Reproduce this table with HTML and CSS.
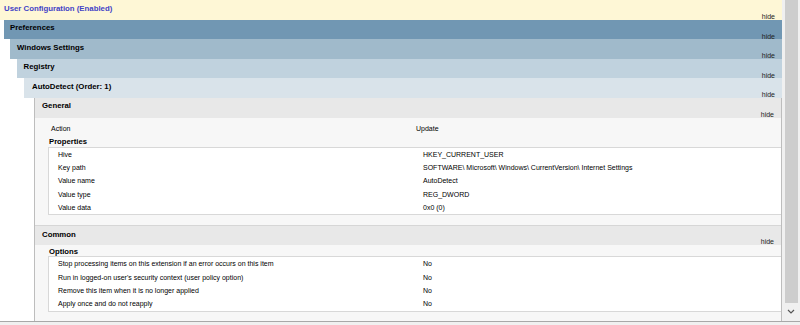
FILE: index.html
```html
<!DOCTYPE html>
<html>
<head>
<meta charset="utf-8">
<link rel="stylesheet" href="styles.css">
</head>
<body>
<div class="window">
  <div class="viewport">
    <div class="bar he0"><span class="title">User Configuration (Enabled)</span><span class="hide">hide</span></div>
    <div class="level l1">
      <div class="bar he1h"><span class="title">Preferences</span><span class="hide">hide</span></div>
      <div class="level l2">
        <div class="bar he1"><span class="title">Windows Settings</span><span class="hide">hide</span></div>
        <div class="level l3">
          <div class="bar he2"><span class="title">Registry</span><span class="hide">hide</span></div>
          <div class="level l4">
            <div class="bar he3"><span class="title">AutoDetect (Order: 1)</span><span class="hide">hide</span></div>
            <div class="level l5">
              <div class="bar he4"><span class="title">General</span><span class="hide">hide</span></div>
              <div class="body">
                <div class="action"><span>Action</span><span>Update</span></div>
                <div class="sub">Properties</div>
                <div class="info">
                  <span>Hive</span><span>HKEY_CURRENT_USER</span>
                  <span>Key path</span><span>SOFTWARE\ Microsoft\ Windows\ CurrentVersion\ Internet Settings</span>
                  <span>Value name</span><span>AutoDetect</span>
                  <span>Value type</span><span>REG_DWORD</span>
                  <span>Value data</span><span>0x0 (0)</span>
                </div>
                <div class="gap"></div>
              </div>
              <div class="bar he4"><span class="title">Common</span><span class="hide">hide</span></div>
              <div class="body">
                <div class="sub">Options</div>
                <div class="info">
                  <span>Stop processing items on this extension if an error occurs on this item</span><span>No</span>
                  <span>Run in logged-on user's security context (user policy option)</span><span>No</span>
                  <span>Remove this item when it is no longer applied</span><span>No</span>
                  <span>Apply once and do not reapply</span><span>No</span>
                </div>
                <div class="gap"></div>
              </div>
            </div>
          </div>
        </div>
      </div>
    </div>
  </div>
  <div class="vscroll">
    <div class="thumb"></div>
    <svg class="arrow" width="18" height="14" viewBox="0 0 18 14"><path d="M6 5 L9 8 L12 5" fill="none" stroke="#555" stroke-width="1.2"/></svg>
  </div>
  <div class="hscroll"></div>
</div>
</body>
</html>
```

FILE: styles.css
```css
html, body {
  margin: 0;
  padding: 0;
  background: #ffffff;
  overflow: hidden;
}
body {
  font-family: "Liberation Sans", Arial, sans-serif;
  color: #000;
}
.window {
  display: grid;
  grid-template-columns: 782px 18px;
  grid-template-rows: 321px 4px;
  width: 800px;
  height: 325px;
}
.viewport {
  overflow: hidden;
  background: #fff;
}
.bar {
  box-sizing: border-box;
  height: 19.6px;
  display: flex;
  justify-content: space-between;
  padding-right: 7px;
}
.bar .title {
  font-weight: bold;
  font-size: 7.8px;
  line-height: 9px;
  padding-top: 3.5px;
  align-self: flex-start;
  white-space: nowrap;
}
.bar .hide {
  font-size: 7px;
  line-height: 7px;
  align-self: flex-end;
  margin-bottom: -0.5px;
  color: #222;
}
.he0 { background: #fef7d6; padding-left: 4px; }
.he0 .title { color: #4242c6; }
.he1h { background: #7197b3; padding-left: 6px; }
.he1 { background: #a0bacb; padding-left: 7px; }
.he2 { background: #c0d2de; padding-left: 6.5px; }
.he3 { background: #d9e3ea; padding-left: 8px; }
.he4 { background: #e8e8e8; padding-left: 7px; border-top: 1px solid #d6d6d6; }
.l1 { margin-left: 4px; }
.l2 { margin-left: 6px; }
.l3 { margin-left: 7px; }
.l4 { margin-left: 7px; }
.l5 {
  margin-left: 10px;
  border-left: 1px solid #bdbdbd;
  border-right: 1px solid #bdbdbd;
  background: #f7f7f7;
}
.l5 > .bar:first-child { border-top: none; }
.body {
  font-size: 7px;
}
.action {
  display: grid;
  grid-template-columns: 365px 1fr;
  padding: 4.5px 0 0 16px;
  height: 13px;
  line-height: 13px;
}
.sub {
  font-weight: bold;
  font-size: 7.7px;
  line-height: 8.5px;
  padding: 3px 0 0 14px;
}
.info {
  margin-left: 13px;
  background: #fff;
  border: 1px solid #d8d8d8;
  border-right: none;
  display: grid;
  grid-template-columns: 1fr 1fr;
  grid-auto-rows: 13.33px;
  line-height: 13.33px;
}
.info span:nth-child(odd) { padding-left: 9px; white-space: nowrap; }
.info span:nth-child(even) { padding-left: 8px; white-space: nowrap; }
.gap { height: 10px; }
.vscroll {
  background: #f0f0f0;
  display: flex;
  flex-direction: column;
  align-items: center;
}
.thumb {
  width: 13px;
  height: 303px;
  background: #cdcdcd;
  margin-left: 1px;
}
.arrow { display: block; margin-top: 2px; }
.hscroll {
  grid-column: 1 / 3;
  background: #f0f0f0;
  border-top: 1px solid #a8a8a8;
}
```
